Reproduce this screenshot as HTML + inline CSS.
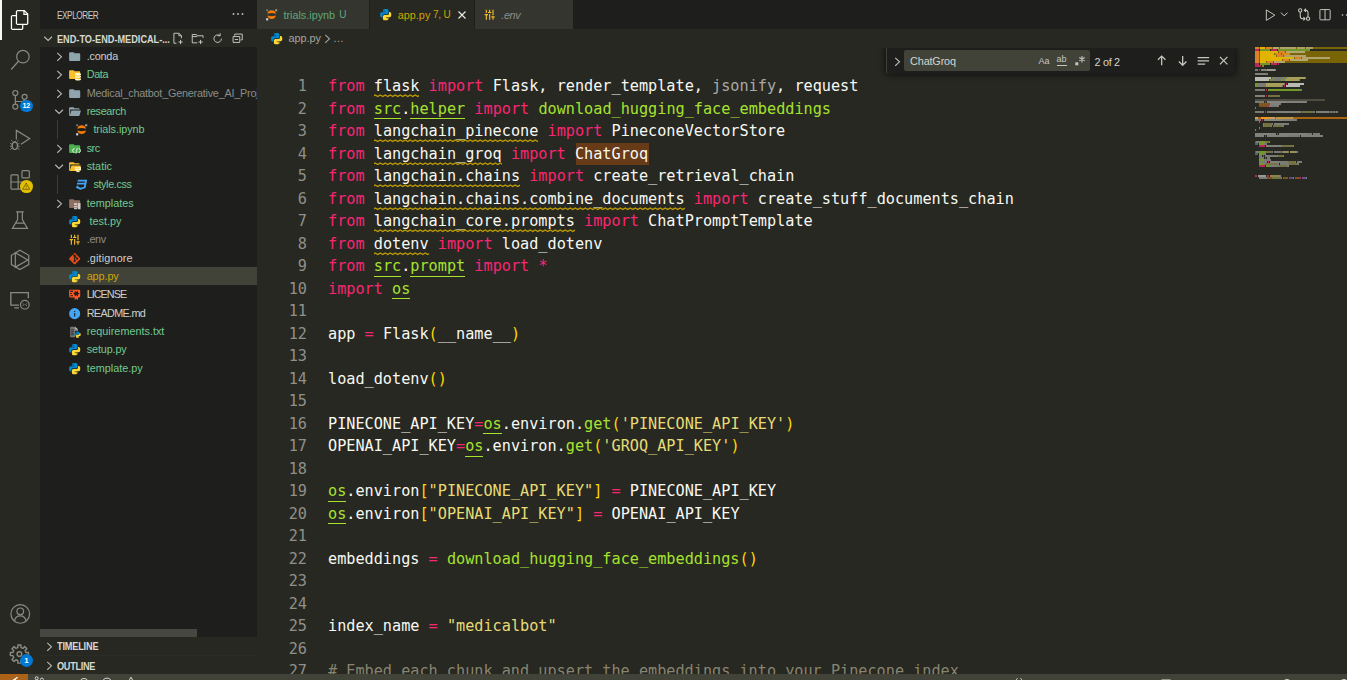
<!DOCTYPE html>
<html lang="en">
<head>
<meta charset="utf-8">
<title>app.py - End-to-end-Medical-Chatbot - Visual Studio Code</title>
<style>
*{box-sizing:border-box;margin:0;padding:0}
html,body{width:1347px;height:680px;overflow:hidden;background:#272822}
body{position:relative;font-family:"Liberation Sans",sans-serif;font-size:10.83px;color:#ccc}
/* activity bar */
#act{position:absolute;left:0;top:0;width:40px;height:674px;background:#272822;overflow:hidden}
#act .ind{position:absolute;left:0;top:0;width:1.500px;height:40px;background:#f8f8f2}
#act>svg{position:absolute;left:10px;width:20px;height:20px;fill:none;stroke:#8a8a80;stroke-width:1.450;overflow:visible}
.badge{position:absolute;border-radius:50%;background:#0078d4;color:#fff;font-weight:700;text-align:center}
.badge svg{position:absolute;fill:none}
/* sidebar */
#side{position:absolute;left:40px;top:0;width:217px;height:674px;background:#1e1f1c;overflow:hidden}
#side .title{position:absolute;left:17px;top:9.850px;font-size:10px;line-height:11px;color:#ccccc7;letter-spacing:-.550px;white-space:nowrap;transform:scaleX(.826);transform-origin:0 0}
#side .sec{position:absolute;left:0;top:29px;width:217px;height:18.200px;background:#272822}
#side .sec b{position:absolute;left:17px;top:4.800px;font-size:10px;line-height:11px;color:#d8d8d2;font-weight:700;white-space:nowrap;transform:scaleX(.917);transform-origin:0 0}
.row{position:absolute;left:0;width:217px;height:18.330px;line-height:18.100px;white-space:nowrap;color:#cfcfc9}
.row span{position:absolute;top:0}
.row.g span{color:#73c991}
.row.dim span{color:#8c8c86}
.row.sel{background:#414339}
.row.sel span{color:#cca700}
.tw{position:absolute;top:2.800px;width:13.330px;height:13.330px;color:#bdbdb8}
.ic{position:absolute;top:2.900px;width:13.330px;height:13.330px}
.guide{position:absolute;left:17px;width:1px;height:18.330px;background:#3b3c37}
.pane{position:absolute;left:0;width:217px;height:18.500px;background:#272822}
.pane b{position:absolute;left:17px;top:4.300px;font-size:10px;line-height:11px;color:#d8d8d2;font-weight:700;transform:scaleX(.917);transform-origin:0 0}
/* editor */
#tabs{position:absolute;left:257px;top:0;width:1090px;height:29.170px;background:#1e1f1c;overflow:hidden}
.tab{position:absolute;top:0;height:29.170px;background:#34352f;line-height:30.500px;white-space:nowrap;border-right:1px solid #1e1f1c}
.tab.act{background:#272822}
.tab span{position:absolute;top:0}
.ea{position:absolute;width:13.330px;height:13.330px;fill:none;stroke:#d0d0ca;stroke-width:1.100}
#crumbs{position:absolute;left:257px;top:29.170px;width:1090px;height:18.330px;line-height:18.500px;background:#272822;color:#a6a6a0;white-space:nowrap}
#crumbs span{position:absolute;top:0}
/* code */
#code{position:absolute;left:257px;top:75px;width:998px;height:599px;overflow:hidden;font-family:"DejaVu Sans Mono","Liberation Mono",monospace;font-size:15.200px;color:#f8f8f2}
.ln{position:absolute;left:0;width:998px;height:22.500px;line-height:22.500px;white-space:pre}
.ln i{position:absolute;left:0;width:50px;text-align:right;color:#90908a;font-style:normal}
.ln code{position:absolute;left:71px;font-family:inherit;font-size:inherit}
.k{color:#f92672}.f{color:#a6e22e}.s{color:#e6db74}.c{color:#88846f}.p{color:#f8f8f2}.y{color:#ffd700}.d{color:#a9a9a3}
.sq{position:relative}
.sq svg{position:absolute;left:0;top:calc(100% - .600px);width:100%;height:4px;overflow:hidden}
.ul{border-bottom:1px solid #a6e22e;padding-bottom:.600px}
.fmb{position:absolute;top:0;height:22.500px;background:#673a18}
/* find widget */
#findc{position:absolute;left:870px;top:47.500px;width:390px;height:45px;overflow:hidden}
#find{position:absolute;left:16px;top:-.500px;width:349px;height:27.300px;border-radius:0 0 3px 3px;background:#1e1f1c;box-shadow:0 0 6px 1px rgba(0,0,0,.600);border-left:1px solid #3e3f39;color:#d4d4ce;white-space:nowrap}
#find .inp{position:absolute;left:17px;top:3.300px;width:186px;height:21px;background:#414339;line-height:21px;border-radius:2px}
#find span{position:absolute;top:0}
#find .opt{font-size:9px;color:#c5c5c0}
#find .cnt{top:4.700px;line-height:20.800px;letter-spacing:-.3px}
.fb{position:absolute;top:7px;width:13.330px;height:13.330px;fill:none;stroke:#c4c4be;stroke-width:1.550}
#mm{position:absolute;left:1255px;top:47px}
#status{position:absolute;left:0;top:673.500px;width:1347px;height:7px;background:#414339;overflow:hidden}
#status .rem{position:absolute;left:0;top:0;width:28px;height:7px;background:#ac6218}
#status svg{position:absolute;top:1px;width:12px;height:12px;fill:none;stroke:#e8e8e2;stroke-width:1.200}
</style>
</head>
<body>
<svg width="0" height="0" style="position:absolute">
<defs>
<pattern id="wz" width="5" height="4" patternUnits="userSpaceOnUse"><path d="M-1.25 2.55 L1.25 0.95 L3.75 2.55 L6.25 0.95" fill="none" stroke="#c4a000" stroke-width="1.15" stroke-linejoin="round"/></pattern>
<symbol id="i-folder" viewBox="0 0 24 24"><path fill="#90a4ae" d="M10 4H4c-1.11 0-2 .89-2 2v12a2 2 0 0 0 2 2h16a2 2 0 0 0 2-2V8c0-1.11-.9-2-2-2h-8l-2-2z"/></symbol>
<symbol id="i-folder-open" viewBox="0 0 24 24"><path fill="#90a4ae" d="M19 20H4a2 2 0 0 1-2-2V6c0-1.11.89-2 2-2h6l2 2h7a2 2 0 0 1 2 2H4v10l2.14-8h17.07l-2.28 8.5c-.23.87-1.01 1.5-1.93 1.5z"/></symbol>
<symbol id="i-folder-data" viewBox="0 0 24 24"><path fill="#fbc02d" d="M10 4H4c-1.11 0-2 .89-2 2v12a2 2 0 0 0 2 2h16a2 2 0 0 0 2-2V8c0-1.11-.9-2-2-2h-8l-2-2z"/><g fill="#fff9c4"><ellipse cx="18" cy="11.5" rx="5.5" ry="2.3"/><path d="M12.5 13.2c0 1.3 2.5 2.3 5.5 2.300s5.500-1 5.500-2.300v2.600c0 1.300-2.500 2.300-5.500 2.300s-5.500-1-5.500-2.300z"/><path d="M12.500 17.500c0 1.300 2.500 2.300 5.500 2.300s5.500-1 5.500-2.300v2.600c0 1.300-2.500 2.300-5.500 2.300s-5.500-1-5.500-2.300z"/></g></symbol>
<symbol id="i-folder-src" viewBox="0 0 24 24"><path fill="#4caf50" d="M10 4H4c-1.11 0-2 .89-2 2v12a2 2 0 0 0 2 2h16a2 2 0 0 0 2-2V8c0-1.11-.9-2-2-2h-8l-2-2z"/><path fill="none" stroke="#c8e6c9" stroke-width="1.900" d="M11.700 11.200 7.700 15.500l4 4.300M19.300 11.200l4 4.300-4 4.300M16.900 10.500l-2.800 10.500"/></symbol>
<symbol id="i-folder-static" viewBox="0 0 24 24"><path fill="#fbc02d" d="M19 20H4a2 2 0 0 1-2-2V6c0-1.11.89-2 2-2h6l2 2h7a2 2 0 0 1 2 2H4v10l2.140-8h17.070l-2.280 8.500c-.23.870-1.010 1.500-1.930 1.500z"/><g fill="#fff9c4"><rect x="12.500" y="12.500" width="11" height="6.500" rx="1"/><rect x="15" y="20" width="6" height="1.800"/></g><path fill="#fbc02d" d="M14 14h8v1.300h-8z"/></symbol>
<symbol id="i-folder-tpl" viewBox="0 0 24 24"><path fill="#8d6e63" d="M10 4H4c-1.110 0-2 .89-2 2v12a2 2 0 0 0 2 2h16a2 2 0 0 0 2-2V8c0-1.110-.9-2-2-2h-8l-2-2z"/><g fill="#d7ccc8"><rect x="11" y="11" width="5" height="3.500"/><rect x="17.500" y="11" width="5" height="11"/><rect x="11" y="16" width="5" height="2.500"/><rect x="11" y="19.500" width="5" height="2.500"/></g></symbol>
<symbol id="i-py" viewBox="0 0 24 24"><path fill="#0288d1" d="M9.860 2A2.860 2.860 0 0 0 7 4.860v1.680h4.290c.39 0 .71.570.71.960H4.860A2.860 2.860 0 0 0 2 10.360v3.781a2.860 2.860 0 0 0 2.860 2.860h1.180v-2.680a2.850 2.850 0 0 1 2.850-2.860h5.250c1.580 0 2.860-1.271 2.860-2.851V4.860A2.860 2.860 0 0 0 14.140 2zm-.72 1.610c.4 0 .72.120.72.710s-.32.891-.72.891c-.39 0-.71-.3-.71-.89s.32-.711.710-.711"/><path fill="#fdd835" d="M17.959 7v2.680a2.850 2.850 0 0 1-2.850 2.859H9.860A2.850 2.850 0 0 0 7 15.389v3.750a2.860 2.860 0 0 0 2.860 2.860h4.280A2.860 2.860 0 0 0 17 19.140v-1.680h-4.291c-.39 0-.709-.57-.709-.96h7.140A2.860 2.860 0 0 0 22 13.640V9.860A2.860 2.860 0 0 0 19.140 7zm-3.099 11.789c.39 0 .71.3.71.890a.71.710 0 0 1-.71.710c-.4 0-.72-.12-.72-.71s.32-.89.720-.890"/></symbol>
<symbol id="i-jup" viewBox="0 0 24 24"><path fill="#f57c00" d="M4.200 10.300A8 8 0 0 1 19.800 10.300Q12 7.900 4.200 10.300zM4.200 13.700A8 8 0 0 0 19.800 13.700Q12 16.100 4.200 13.700z"/><rect x="2.100" y="2.300" width="3.600" height="3.600" fill="#757575"/><rect x="18.200" y="2.300" width="3.800" height="3.600" fill="#9e9e9e"/><rect x="2.100" y="18.400" width="3.700" height="3.900" fill="#e0e0e0"/></symbol>
<symbol id="i-css" viewBox="0 0 24 24"><path fill="#42a5f5" d="M5 3l-.65 3.340h13.590L17.500 8.500H3.920l-.66 3.330h13.590l-.760 3.810-5.480 1.810-4.750-1.810.33-1.640H2.850l-.79 4 7.850 3 9.050-3 1.200-6.030.24-1.210L21.940 3z"/></symbol>
<symbol id="i-env" viewBox="0 0 24 24"><g fill="#fbc02d"><path d="M3 17v2h6v-2zM3 5v2h10V5zm10 16v-2h8v-2h-8v-2h-2v6zM7 9v2H3v2h4v2h2V9zm14 4v-2H11v2zm-6-4h2V7h4V5h-4V3h-2z" transform="rotate(90 12 12)"/></g></symbol>
<symbol id="i-git" viewBox="0 0 24 24"><path fill="#e64a19" d="M2.600 10.590 8.380 4.800l1.690 1.700c-.24.850.150 1.780.930 2.230v5.540c-.6.340-1 .990-1 1.730a2 2 0 0 0 2 2 2 2 0 0 0 2-2c0-.740-.4-1.390-1-1.730V9.410l2.070 2.090c-.07.150-.07.320-.7.500a2 2 0 0 0 2 2 2 2 0 0 0 2-2 2 2 0 0 0-2-2c-.18 0-.35 0-.5.070L13.930 7.500a1.980 1.980 0 0 0-1.150-2.340c-.43-.160-.88-.2-1.280-.09L9.800 3.380l.79-.78c.78-.79 2.040-.79 2.820 0l7.990 7.990c.79.780.79 2.040 0 2.820l-7.990 7.990c-.78.790-2.040.79-2.820 0L2.600 13.410c-.79-.78-.79-2.040 0-2.820z"/></symbol>
<symbol id="i-lic" viewBox="0 0 24 24"><path fill="#ff5722" d="M4 3c-1.110 0-2 .89-2 2v10a2 2 0 0 0 2 2h8v5l3-3 3 3v-5h2a2 2 0 0 0 2-2V5a2 2 0 0 0-2-2H4m8 2 3 2 3-2v3.500l3 1.500-3 1.500V15l-3-2-3 2v-3.500L9 10l3-1.500V5M4 5h5v2H4V5m0 4h3v2H4V9m0 4h5v2H4v-2z"/></symbol>
<symbol id="i-readme" viewBox="0 0 24 24"><path fill="#42a5f5" d="M13 9h-2V7h2m0 10h-2v-6h2m-1-9A10 10 0 0 0 2 12a10 10 0 0 0 10 10 10 10 0 0 0 10-10A10 10 0 0 0 12 2z"/></symbol>
<symbol id="i-req" viewBox="0 0 24 24"><path fill="#757575" d="M4 3h9l5 5v3h-5v11H4z"/><path fill="#bdbdbd" d="M13 3l5 5h-5z"/><g fill="#1e1f1c"><rect x="5.500" y="8" width="5" height="1.300"/><rect x="5.500" y="11" width="5" height="1.300"/><rect x="5.500" y="14" width="5" height="1.300"/><rect x="5.500" y="17" width="5" height="1.300"/></g><g transform="translate(10.500 10.500) scale(.56)"><path fill="#0288d1" d="M9.860 2A2.860 2.860 0 0 0 7 4.860v1.680h4.290c.39 0 .71.570.71.960H4.860A2.860 2.860 0 0 0 2 10.360v3.781a2.860 2.860 0 0 0 2.860 2.860h1.180v-2.680a2.850 2.850 0 0 1 2.850-2.860h5.250c1.580 0 2.860-1.271 2.860-2.851V4.860A2.860 2.860 0 0 0 14.140 2z"/><path fill="#fdd835" d="M17.959 7v2.680a2.850 2.850 0 0 1-2.850 2.859H9.860A2.850 2.850 0 0 0 7 15.389v3.750a2.860 2.860 0 0 0 2.860 2.860h4.280A2.860 2.860 0 0 0 17 19.140v-1.680h-4.291c-.39 0-.709-.57-.709-.96h7.140A2.860 2.860 0 0 0 22 13.640V9.860A2.860 2.860 0 0 0 19.140 7z"/></g></symbol>
<symbol id="c-right" viewBox="0 0 16 16"><path fill="none" stroke="currentColor" stroke-width="1.250" d="M6.300 3.500 11.400 8.200 6.300 12.900"/></symbol>
<symbol id="c-down" viewBox="0 0 16 16"><path fill="none" stroke="currentColor" stroke-width="1.250" d="M3.900 5.700 8.550 10.100 13.200 5.700"/></symbol>
</defs>
</svg>
<div id="act"><div class="ind"></div>
<!-- explorer (files) -->
<svg style="top:10px" viewBox="0 0 24 24"><path d="M17.500 0h-9L7 1.500V6H2.500L1 7.500v15.070L2.500 24h12.070L16 22.570V18h4.700l1.300-1.430V4.500L17.500 0zm0 2.120 2.380 2.380H17.500V2.120zm-3 20.380h-12v-15H7v9.070L8.500 18h6v4.500zm6-6h-12v-15H16V6h4.500v10.500z" fill="#fff" stroke="none"/></svg>
<!-- search -->
<svg style="top:50px" viewBox="0 0 24 24"><circle cx="15.500" cy="8" r="7.500"/><path d="M10.200 13.500 1.400 23.400"/></svg>
<!-- source control -->
<svg style="top:90px" viewBox="0 0 24 24"><circle cx="6.400" cy="3.600" r="3"/><circle cx="6.400" cy="19.900" r="3"/><circle cx="17.500" cy="8.200" r="3"/><path d="M6.400 6.600v10.300M17.500 11.200c0 2.600-1.500 2.600-4 2.600H6.400"/></svg>
<div class="badge" style="left:20px;top:99.700px;width:12.800px;height:12.800px;line-height:12.800px;font-size:7.200px;letter-spacing:-.4px;text-indent:-.4px">12</div>
<!-- run and debug -->
<svg style="top:130px" viewBox="0 0 24 24"><path d="M7.600 11.500V.500L23.600 10.300 13.200 17"/><ellipse cx="5.800" cy="19" rx="3.100" ry="4.400"/><path d="M3.400 15.500 5 14h1.600l1.600 1.500M2.700 17.500.300 16M2.700 19.500H0M2.700 21.500.300 23.500M8.900 17.500l2.400-1.500M8.900 19.500h2.700M8.900 21.500l2.400 2M3 13.500 1.500 12.300M8.600 13.500l1.500-1.200" stroke-width="1.200"/></svg>
<!-- extensions -->
<svg style="top:170px" viewBox="0 0 24 24"><path d="M2.200 5.800h6.600a1 1 0 0 1 1 1v7.600H1.200V6.800a1 1 0 0 1 1-1zM1.200 14.400h8.600V23H2.200a1 1 0 0 1-1-1zM9.800 14.400h7.600a1 1 0 0 1 1 1V22a1 1 0 0 1-1 1H9.800z"/><rect x="14.400" y=".7" width="8.800" height="8.800" rx="1.200"/></svg>
<div class="badge" style="left:20.200px;top:180px;width:12.800px;height:12.800px;background:#e3bf00"><svg viewBox="0 0 12 12" style="left:2.200px;top:1.700px;width:8.400px;height:8.400px;stroke:#5c4a00;stroke-width:1"><path d="M6 1.300 11 10.500H1zM6 4.800v3.200M6 8.800v.8"/></svg></div>
<!-- testing (beaker) -->
<svg style="top:210px" viewBox="0 0 24 24"><path d="M7.300 2.300h9.100M9.100 2.300v9.200L2.900 22h18L14.800 11.500V2.300M6.500 15.800h11"/></svg>
<!-- play hexagon -->
<svg style="top:250px" viewBox="0 0 24 24"><path d="M11.900 .300 22.500 6.300v11.200l-10.600 6L1.700 17.500V6.300z"/><path d="M6.400 3.200 21.400 11.900 6.400 20.500z"/></svg>
<!-- remote explorer -->
<svg style="top:290px" viewBox="0 0 24 24"><path d="M10.700 18.200H1v-15h21v6.600M5.200 21.500h5.500" stroke-width="1.600"/><circle cx="17.800" cy="17.600" r="5.200"/><path d="M15.300 16l1.500 1.600-1.500 1.600M20.300 16l-1.500 1.600 1.500 1.600" stroke-width="1"/></svg>
<!-- account -->
<svg style="top:604px" viewBox="0 0 24 24"><circle cx="12.300" cy="11.900" r="11.200"/><circle cx="12.300" cy="8.800" r="4"/><path d="M5.300 20.500c.8-4.300 3.500-6.200 7-6.200s6.200 1.900 7 6.200"/></svg>
<!-- settings gear -->
<svg style="top:644px" viewBox="0 0 24 24"><circle cx="11.3" cy="12.1" r="2.800" stroke-width="1.700"/><path stroke-width="1.700" d="M9.43 4.32 L9.48 1.25 L13.12 1.25 L13.17 4.32 L15.48 5.28 L17.69 3.14 L20.26 5.71 L18.12 7.92 L19.08 10.23 L22.15 10.28 L22.15 13.92 L19.08 13.97 L18.12 16.28 L20.26 18.49 L17.69 21.06 L15.48 18.92 L13.17 19.88 L13.12 22.95 L9.48 22.95 L9.43 19.88 L7.12 18.92 L4.91 21.06 L2.34 18.49 L4.48 16.28 L3.52 13.97 L0.45 13.92 L0.45 10.28 L3.52 10.23 L4.48 7.92 L2.34 5.71 L4.91 3.14 L7.12 5.28z" stroke-linejoin="round"/></svg>
<div class="badge" style="left:20px;top:653.700px;width:13px;height:13px;line-height:13px;font-size:8px">1</div>
</div>
<div id="side">
<div class="title">EXPLORER</div>
<svg style="position:absolute;left:192px;top:11px;width:12px;height:6px" viewBox="0 0 12 6"><circle cx="1.500" cy="3" r=".9" fill="#c5c5c0"/><circle cx="6" cy="3" r=".9" fill="#c5c5c0"/><circle cx="10.500" cy="3" r=".9" fill="#c5c5c0"/></svg>
<div class="sec"><svg class="tw" style="left:.800px;top:3.200px"><use href="#c-down"/></svg><b>END-TO-END-MEDICAL-...</b>
<svg class="ea" style="left:131px;top:2.600px" viewBox="0 0 16 16"><path d="M9.500 1.500h-6v12h3M9.500 1.500l3 3v3M9.500 1.500v3h3M11.500 9.500v5M9 12h5"/></svg>
<svg class="ea" style="left:151px;top:2.600px" viewBox="0 0 16 16"><path d="M14.500 7V4.500h-7l-1-1.500h-5v10h6M11.500 9.500v5M9 12h5M1.500 5.500h6"/></svg>
<svg class="ea" style="left:171px;top:2.600px" viewBox="0 0 16 16"><path d="M12.500 8a4.500 4.500 0 1 1-1.800-3.600M11 1.500v3h-3"/></svg>
<svg class="ea" style="left:191px;top:2.600px" viewBox="0 0 16 16"><path d="M4.500 4.500v-2h9v7h-2M2.500 5.500h8v7h-8zM4.500 9h4"/></svg>
</div>
<div class="row " style="top:47.10px"><svg class="tw" style="left:12px"><use href="#c-right"/></svg><svg class="ic" style="left:27.8px"><use href="#i-folder"/></svg><span style="left:46.7px;letter-spacing:-0.2px">.conda</span></div>
<div class="row g" style="top:65.43px"><svg class="tw" style="left:12px"><use href="#c-right"/></svg><svg class="ic" style="left:27.8px"><use href="#i-folder-data"/></svg><span style="left:46.7px;letter-spacing:-0.37px">Data</span></div>
<div class="row dim" style="top:83.77px"><svg class="tw" style="left:12px"><use href="#c-right"/></svg><svg class="ic" style="left:27.8px"><use href="#i-folder"/></svg><span style="left:46.7px;letter-spacing:-0.226px">Medical_chatbot_Generative_AI_Project</span></div>
<div class="row g" style="top:102.10px"><svg class="tw" style="left:12px"><use href="#c-down"/></svg><svg class="ic" style="left:27.8px"><use href="#i-folder-open"/></svg><span style="left:46.7px;letter-spacing:-0.367px">research</span></div>
<div class="row g" style="top:120.43px"><svg class="ic" style="left:34.5px"><use href="#i-jup"/></svg><span style="left:53.4px;letter-spacing:-0.05px">trials.ipynb</span></div>
<div class="row g" style="top:138.77px"><svg class="tw" style="left:12px"><use href="#c-right"/></svg><svg class="ic" style="left:27.8px"><use href="#i-folder-src"/></svg><span style="left:46.7px;letter-spacing:-0.48px">src</span></div>
<div class="row g" style="top:157.10px"><svg class="tw" style="left:12px"><use href="#c-down"/></svg><svg class="ic" style="left:27.8px"><use href="#i-folder-static"/></svg><span style="left:46.7px">static</span></div>
<div class="row g" style="top:175.43px"><svg class="ic" style="left:34.5px"><use href="#i-css"/></svg><span style="left:53.4px;letter-spacing:-0.37px">style.css</span></div>
<div class="row g" style="top:193.77px"><svg class="tw" style="left:12px"><use href="#c-right"/></svg><svg class="ic" style="left:27.8px"><use href="#i-folder-tpl"/></svg><span style="left:46.7px">templates</span></div>
<div class="row g" style="top:212.10px"><svg class="ic" style="left:27.8px"><use href="#i-py"/></svg><span style="left:49.5px">test.py</span></div>
<div class="row dim" style="top:230.43px"><svg class="ic" style="left:27.8px"><use href="#i-env"/></svg><span style="left:46.7px;letter-spacing:-0.32px">.env</span></div>
<div class="row " style="top:248.77px"><svg class="ic" style="left:27.8px"><use href="#i-git"/></svg><span style="left:46.7px;letter-spacing:0.155px">.gitignore</span></div>
<div class="row sel" style="top:267.10px"><svg class="ic" style="left:27.8px"><use href="#i-py"/></svg><span style="left:46.7px;letter-spacing:-0.09px">app.py</span></div>
<div class="row " style="top:285.43px"><svg class="ic" style="left:27.8px"><use href="#i-lic"/></svg><span style="left:46.7px;letter-spacing:-0.98px">LICENSE</span></div>
<div class="row " style="top:303.77px"><svg class="ic" style="left:27.8px"><use href="#i-readme"/></svg><span style="left:46.7px;letter-spacing:-0.65px">README.md</span></div>
<div class="row g" style="top:322.10px"><svg class="ic" style="left:27.8px"><use href="#i-req"/></svg><span style="left:46.7px">requirements.txt</span></div>
<div class="row g" style="top:340.43px"><svg class="ic" style="left:27.8px"><use href="#i-py"/></svg><span style="left:46.7px;letter-spacing:-0.12px">setup.py</span></div>
<div class="row g" style="top:358.77px"><svg class="ic" style="left:27.8px"><use href="#i-py"/></svg><span style="left:46.7px">template.py</span></div>
<div class="guide" style="top:120.43px"></div>
<div class="guide" style="top:175.43px"></div>

<div style="position:absolute;left:0;top:629px;width:157px;height:8.300px;background:#464741"></div>
<div class="pane" style="top:637.200px"><svg class="tw" style="left:1.500px;top:2.500px"><use href="#c-right"/></svg><b style="letter-spacing:-.2px">TIMELINE</b></div>
<div class="pane" style="top:655.400px;border-top:1px solid #2b2c26"><svg class="tw" style="left:1.500px;top:2.500px"><use href="#c-right"/></svg><b style="letter-spacing:-.33px">OUTLINE</b></div>
</div>
<div id="tabs">
<div class="tab" style="left:0;width:113.200px"><svg class="ic" style="left:7.700px;top:7.800px"><use href="#i-jup"/></svg><span style="left:26.400px;color:#5fa87a">trials.ipynb</span><span style="left:82.300px;top:.400px;color:#5fa87a;font-size:10px">U</span></div>
<div class="tab act" style="left:113.200px;width:105px"><svg class="ic" style="left:8.600px;top:7.800px"><use href="#i-py"/></svg><span style="left:27.600px;color:#cca700">app.py</span><span style="left:62.800px;top:.400px;color:#cca700;font-size:10px;letter-spacing:-.2px">7, U</span><svg style="position:absolute;left:87.300px;top:9.500px;width:10px;height:10px" viewBox="0 0 10 10"><path d="M1.500 1.500l7 7M8.500 1.500l-7 7" stroke="#f0f0ea" stroke-width="1.100" fill="none"/></svg></div>
<div class="tab" style="left:218.200px;width:98.500px"><svg class="ic" style="left:7.500px;top:7.800px"><use href="#i-env"/></svg><span style="left:26px;color:#8c8c86;font-style:italic;letter-spacing:-.3px">.env</span></div>
<!-- editor actions -->
<svg class="ea" style="left:1006px;top:7.500px" viewBox="0 0 16 16"><path d="M4 2.300v12.600l10.200-6.300z"/></svg>
<svg class="ea" style="left:1022.300px;top:8.800px;width:10.500px;height:10.500px" viewBox="0 0 16 16"><path d="M3 5.500l5 5 5-5" stroke-width="1.500"/></svg>
<svg class="ea" style="left:1039.500px;top:7px;width:14.700px;height:14.700px" viewBox="0 0 16 16"><circle cx="3.500" cy="3.800" r="1.800"/><circle cx="12" cy="12.700" r="1.800"/><path d="M3.500 5.600V10c0 2 1 2.700 2.500 2.700h2.200M7 10.900l1.700 1.800L7 14.500M12 10.900V6.300c0-2-1-2.700-2.500-2.700H8.300M9.700 1.800 8 3.600l1.700 1.800"/></svg>
<svg class="ea" style="left:1061px;top:7.500px" viewBox="0 0 16 16"><rect x="2.300" y="1.900" width="12.300" height="12.300" rx="1"/><path d="M8.450 1.900v12.300"/></svg>
<svg class="ea" style="left:1083px;top:7.500px" viewBox="0 0 16 16"><circle cx="3" cy="8.400" r="1" fill="#d0d0ca" stroke="none"/><circle cx="8" cy="8.400" r="1" fill="#d0d0ca" stroke="none"/></svg>
</div>
<div id="crumbs"><svg class="ic" style="left:13.300px;top:2.600px"><use href="#i-py"/></svg><span style="left:31.500px">app.py</span><svg class="tw" style="left:62.500px;top:2.800px;color:#a6a6a0"><use href="#c-right"/></svg><span style="left:76px;letter-spacing:-.3px">…</span></div>
<div id="code">
<div class="ln" style="top:0.0px"><i>1</i><code><span class="k">from</span> <span class="sq">flask<svg><rect width="100%" height="4" fill="url(#wz)"/></svg></span> <span class="k">import</span> Flask, render_template, <span class="d">jsonify</span>, request</code></div>
<div class="ln" style="top:22.5px"><i>2</i><code><span class="k">from</span> <span class="f ul">src</span>.<span class="f ul">helper</span> <span class="k">import</span> <span class="f">download_hugging_face_embeddings</span></code></div>
<div class="ln" style="top:45.0px"><i>3</i><code><span class="k">from</span> <span class="sq">langchain_pinecone<svg><rect width="100%" height="4" fill="url(#wz)"/></svg></span> <span class="k">import</span> PineconeVectorStore</code></div>
<div class="ln" style="top:67.5px"><div class="fmb" style="left:318.500px;width:73.200px"></div><i>4</i><code><span class="k">from</span> <span class="sq">langchain_groq<svg><rect width="100%" height="4" fill="url(#wz)"/></svg></span> <span class="k">import</span> ChatGroq</code></div>
<div class="ln" style="top:90.0px"><i>5</i><code><span class="k">from</span> <span class="sq">langchain.chains<svg><rect width="100%" height="4" fill="url(#wz)"/></svg></span> <span class="k">import</span> create_retrieval_chain</code></div>
<div class="ln" style="top:112.5px"><i>6</i><code><span class="k">from</span> <span class="sq">langchain.chains.combine_documents<svg><rect width="100%" height="4" fill="url(#wz)"/></svg></span> <span class="k">import</span> create_stuff_documents_chain</code></div>
<div class="ln" style="top:135.0px"><i>7</i><code><span class="k">from</span> <span class="sq">langchain_core.prompts<svg><rect width="100%" height="4" fill="url(#wz)"/></svg></span> <span class="k">import</span> ChatPromptTemplate</code></div>
<div class="ln" style="top:157.5px"><i>8</i><code><span class="k">from</span> <span class="sq">dotenv<svg><rect width="100%" height="4" fill="url(#wz)"/></svg></span> <span class="k">import</span> load_dotenv</code></div>
<div class="ln" style="top:180.0px"><i>9</i><code><span class="k">from</span> <span class="f ul">src</span>.<span class="f ul">prompt</span> <span class="k">import</span> <span class="k">*</span></code></div>
<div class="ln" style="top:202.5px"><i>10</i><code><span class="k">import</span> <span class="f ul">os</span></code></div>
<div class="ln" style="top:225.0px"><i>11</i><code></code></div>
<div class="ln" style="top:247.5px"><i>12</i><code>app <span class="k">=</span> Flask<span class="y">(</span>__name__<span class="y">)</span></code></div>
<div class="ln" style="top:270.0px"><i>13</i><code></code></div>
<div class="ln" style="top:292.5px"><i>14</i><code>load_dotenv<span class="y">()</span></code></div>
<div class="ln" style="top:315.0px"><i>15</i><code></code></div>
<div class="ln" style="top:337.5px"><i>16</i><code>PINECONE_API_KEY<span class="k">=</span><span class="f ul">os</span>.environ.<span class="f">get</span><span class="y">(</span><span class="s">'PINECONE_API_KEY'</span><span class="y">)</span></code></div>
<div class="ln" style="top:360.0px"><i>17</i><code>OPENAI_API_KEY<span class="k">=</span><span class="f ul">os</span>.environ.<span class="f">get</span><span class="y">(</span><span class="s">'GROQ_API_KEY'</span><span class="y">)</span></code></div>
<div class="ln" style="top:382.5px"><i>18</i><code></code></div>
<div class="ln" style="top:405.0px"><i>19</i><code><span class="f ul">os</span>.environ<span class="y">[</span><span class="s">"PINECONE_API_KEY"</span><span class="y">]</span> <span class="k">=</span> PINECONE_API_KEY</code></div>
<div class="ln" style="top:427.5px"><i>20</i><code><span class="f ul">os</span>.environ<span class="y">[</span><span class="s">"OPENAI_API_KEY"</span><span class="y">]</span> <span class="k">=</span> OPENAI_API_KEY</code></div>
<div class="ln" style="top:450.0px"><i>21</i><code></code></div>
<div class="ln" style="top:472.5px"><i>22</i><code>embeddings <span class="k">=</span> <span class="f">download_hugging_face_embeddings</span><span class="y">()</span></code></div>
<div class="ln" style="top:495.0px"><i>23</i><code></code></div>
<div class="ln" style="top:517.5px"><i>24</i><code></code></div>
<div class="ln" style="top:540.0px"><i>25</i><code>index_name <span class="k">=</span> <span class="s">"medicalbot"</span></code></div>
<div class="ln" style="top:562.5px"><i>26</i><code></code></div>
<div class="ln" style="top:585.0px"><i>27</i><code><span class="c"># Embed each chunk and upsert the embeddings into your Pinecone index</span></code></div>
</div>
<div id="findc"><div id="find">
<svg class="tw" style="left:3px;top:7.500px;color:#c5c5c0"><use href="#c-right"/></svg>
<div class="inp"><span style="left:6.100px;top:.800px;letter-spacing:-.15px">ChatGroq</span>
<span class="opt" style="left:134.400px;top:.400px">Aa</span>
<span class="opt" style="left:152.500px;border-bottom:1px solid #c5c5c0;line-height:11px;top:4px">ab</span>
<svg style="position:absolute;left:169.500px;top:4.500px;width:12px;height:12px" viewBox="0 0 12 12"><rect x="1.300" y="7.300" width="3" height="3" fill="#c5c5c0"/><path d="M8 1v6.400M5.300 2.500l5.400 3.400M10.700 2.500 5.300 5.900" stroke="#c5c5c0" stroke-width="1.100" fill="none"/></svg>
</div>
<span class="cnt" style="left:207.500px">2 of 2</span>
<svg class="fb" style="left:268px" viewBox="0 0 16 16"><path d="M8 13.500v-11M3.500 7 8 2.500 12.500 7"/></svg>
<svg class="fb" style="left:288.500px" viewBox="0 0 16 16"><path d="M8 2.500v11M3.500 9 8 13.500 12.500 9"/></svg>
<svg class="fb" style="left:309.500px" viewBox="0 0 16 16"><path d="M.800 4.300h13.700M.800 8.200h13.700M.800 12.100h9"/></svg>
<svg class="fb" style="left:330px" viewBox="0 0 16 16"><path d="M3.500 3.500l9 9M12.500 3.500l-9 9"/></svg>
</div></div>
<svg id="mm" width="92" height="132" viewBox="0 0 92 132" shape-rendering="crispEdges"><rect x="0" y="0" width="92" height="2" fill="#7a6408"/><rect x="0" y="4" width="92" height="2" fill="#7a6408"/><rect x="0" y="6" width="92" height="2" fill="#7a6408"/><rect x="0" y="8" width="92" height="2" fill="#7a6408"/><rect x="0" y="10" width="92" height="2" fill="#7a6408"/><rect x="0" y="12" width="92" height="2" fill="#7a6408"/><rect x="0" y="14" width="92" height="2" fill="#7a6408"/><rect x="0" y="70" width="92" height="2" fill="#a8650f"/><rect x="0" y="0" width="4" height="2" fill="#e8862a" opacity="0.9"/><rect x="5" y="0" width="5" height="2" fill="#f8f8f2" opacity="0.4"/><rect x="11" y="0" width="6" height="2" fill="#e8862a" opacity="0.9"/><rect x="18" y="0" width="5" height="2" fill="#f8f8f2" opacity="0.46"/><rect x="23" y="0" width="1" height="2" fill="#f8f8f2" opacity="0.4"/><rect x="25" y="0" width="15" height="2" fill="#f8f8f2" opacity="0.42"/><rect x="40" y="0" width="1" height="2" fill="#f8f8f2" opacity="0.4"/><rect x="42" y="0" width="7" height="2" fill="#f8f8f2" opacity="0.4"/><rect x="49" y="0" width="1" height="2" fill="#f8f8f2" opacity="0.4"/><rect x="51" y="0" width="7" height="2" fill="#f8f8f2" opacity="0.4"/><rect x="0" y="2" width="4" height="2" fill="#f92672" opacity="0.7"/><rect x="5" y="2" width="3" height="2" fill="#a6e22e" opacity="0.6"/><rect x="8" y="2" width="1" height="2" fill="#f8f8f2" opacity="0.4"/><rect x="9" y="2" width="6" height="2" fill="#a6e22e" opacity="0.6"/><rect x="16" y="2" width="6" height="2" fill="#f92672" opacity="0.7"/><rect x="23" y="2" width="32" height="2" fill="#a6e22e" opacity="0.6"/><rect x="0" y="4" width="4" height="2" fill="#e8862a" opacity="0.9"/><rect x="5" y="4" width="18" height="2" fill="#f8f8f2" opacity="0.42"/><rect x="24" y="4" width="6" height="2" fill="#e8862a" opacity="0.9"/><rect x="31" y="4" width="19" height="2" fill="#f8f8f2" opacity="0.45"/><rect x="0" y="6" width="4" height="2" fill="#e8862a" opacity="0.9"/><rect x="5" y="6" width="14" height="2" fill="#f8f8f2" opacity="0.42"/><rect x="20" y="6" width="6" height="2" fill="#e8862a" opacity="0.9"/><rect x="27" y="6" width="8" height="2" fill="#f8f8f2" opacity="0.48"/><rect x="0" y="8" width="4" height="2" fill="#e8862a" opacity="0.9"/><rect x="5" y="8" width="9" height="2" fill="#f8f8f2" opacity="0.4"/><rect x="14" y="8" width="1" height="2" fill="#f8f8f2" opacity="0.4"/><rect x="15" y="8" width="6" height="2" fill="#f8f8f2" opacity="0.4"/><rect x="22" y="8" width="6" height="2" fill="#e8862a" opacity="0.9"/><rect x="29" y="8" width="22" height="2" fill="#f8f8f2" opacity="0.43"/><rect x="0" y="10" width="4" height="2" fill="#e8862a" opacity="0.9"/><rect x="5" y="10" width="9" height="2" fill="#f8f8f2" opacity="0.4"/><rect x="14" y="10" width="1" height="2" fill="#f8f8f2" opacity="0.4"/><rect x="15" y="10" width="6" height="2" fill="#f8f8f2" opacity="0.4"/><rect x="21" y="10" width="1" height="2" fill="#f8f8f2" opacity="0.4"/><rect x="22" y="10" width="17" height="2" fill="#f8f8f2" opacity="0.42"/><rect x="40" y="10" width="6" height="2" fill="#e8862a" opacity="0.9"/><rect x="47" y="10" width="28" height="2" fill="#f8f8f2" opacity="0.43"/><rect x="0" y="12" width="4" height="2" fill="#e8862a" opacity="0.9"/><rect x="5" y="12" width="14" height="2" fill="#f8f8f2" opacity="0.42"/><rect x="19" y="12" width="1" height="2" fill="#f8f8f2" opacity="0.4"/><rect x="20" y="12" width="7" height="2" fill="#f8f8f2" opacity="0.4"/><rect x="28" y="12" width="6" height="2" fill="#e8862a" opacity="0.9"/><rect x="35" y="12" width="18" height="2" fill="#f8f8f2" opacity="0.45"/><rect x="0" y="14" width="4" height="2" fill="#e8862a" opacity="0.9"/><rect x="5" y="14" width="6" height="2" fill="#f8f8f2" opacity="0.4"/><rect x="12" y="14" width="6" height="2" fill="#e8862a" opacity="0.9"/><rect x="19" y="14" width="11" height="2" fill="#f8f8f2" opacity="0.43"/><rect x="0" y="16" width="4" height="2" fill="#f92672" opacity="0.7"/><rect x="5" y="16" width="3" height="2" fill="#a6e22e" opacity="0.6"/><rect x="8" y="16" width="1" height="2" fill="#f8f8f2" opacity="0.4"/><rect x="9" y="16" width="6" height="2" fill="#a6e22e" opacity="0.6"/><rect x="16" y="16" width="6" height="2" fill="#f92672" opacity="0.7"/><rect x="23" y="16" width="1" height="2" fill="#f92672" opacity="0.7"/><rect x="0" y="18" width="6" height="2" fill="#f92672" opacity="0.7"/><rect x="7" y="18" width="2" height="2" fill="#a6e22e" opacity="0.6"/><rect x="0" y="22" width="3" height="2" fill="#f8f8f2" opacity="0.4"/><rect x="4" y="22" width="1" height="2" fill="#f92672" opacity="0.7"/><rect x="6" y="22" width="5" height="2" fill="#f8f8f2" opacity="0.46"/><rect x="11" y="22" width="1" height="2" fill="#f8f8f2" opacity="0.4"/><rect x="12" y="22" width="8" height="2" fill="#f8f8f2" opacity="0.55"/><rect x="20" y="22" width="1" height="2" fill="#f8f8f2" opacity="0.4"/><rect x="0" y="26" width="11" height="2" fill="#f8f8f2" opacity="0.43"/><rect x="11" y="26" width="1" height="2" fill="#f8f8f2" opacity="0.4"/><rect x="12" y="26" width="1" height="2" fill="#f8f8f2" opacity="0.4"/><rect x="0" y="30" width="16" height="2" fill="#f8f8f2" opacity="0.7"/><rect x="16" y="30" width="1" height="2" fill="#f92672" opacity="0.7"/><rect x="17" y="30" width="2" height="2" fill="#a6e22e" opacity="0.6"/><rect x="19" y="30" width="1" height="2" fill="#f8f8f2" opacity="0.4"/><rect x="20" y="30" width="7" height="2" fill="#f8f8f2" opacity="0.4"/><rect x="27" y="30" width="1" height="2" fill="#f8f8f2" opacity="0.4"/><rect x="28" y="30" width="3" height="2" fill="#a6e22e" opacity="0.6"/><rect x="31" y="30" width="1" height="2" fill="#f8f8f2" opacity="0.4"/><rect x="32" y="30" width="18" height="2" fill="#e6db74" opacity="0.67"/><rect x="50" y="30" width="1" height="2" fill="#f8f8f2" opacity="0.4"/><rect x="0" y="32" width="14" height="2" fill="#f8f8f2" opacity="0.7"/><rect x="14" y="32" width="1" height="2" fill="#f92672" opacity="0.7"/><rect x="15" y="32" width="2" height="2" fill="#a6e22e" opacity="0.6"/><rect x="17" y="32" width="1" height="2" fill="#f8f8f2" opacity="0.4"/><rect x="18" y="32" width="7" height="2" fill="#f8f8f2" opacity="0.4"/><rect x="25" y="32" width="1" height="2" fill="#f8f8f2" opacity="0.4"/><rect x="26" y="32" width="3" height="2" fill="#a6e22e" opacity="0.6"/><rect x="29" y="32" width="1" height="2" fill="#f8f8f2" opacity="0.4"/><rect x="30" y="32" width="14" height="2" fill="#e6db74" opacity="0.66"/><rect x="44" y="32" width="1" height="2" fill="#f8f8f2" opacity="0.4"/><rect x="0" y="36" width="2" height="2" fill="#a6e22e" opacity="0.6"/><rect x="2" y="36" width="1" height="2" fill="#f8f8f2" opacity="0.4"/><rect x="3" y="36" width="7" height="2" fill="#f8f8f2" opacity="0.4"/><rect x="10" y="36" width="1" height="2" fill="#f8f8f2" opacity="0.4"/><rect x="11" y="36" width="18" height="2" fill="#e6db74" opacity="0.67"/><rect x="29" y="36" width="1" height="2" fill="#f8f8f2" opacity="0.4"/><rect x="31" y="36" width="1" height="2" fill="#f92672" opacity="0.7"/><rect x="33" y="36" width="16" height="2" fill="#f8f8f2" opacity="0.7"/><rect x="0" y="38" width="2" height="2" fill="#a6e22e" opacity="0.6"/><rect x="2" y="38" width="1" height="2" fill="#f8f8f2" opacity="0.4"/><rect x="3" y="38" width="7" height="2" fill="#f8f8f2" opacity="0.4"/><rect x="10" y="38" width="1" height="2" fill="#f8f8f2" opacity="0.4"/><rect x="11" y="38" width="16" height="2" fill="#e6db74" opacity="0.66"/><rect x="27" y="38" width="1" height="2" fill="#f8f8f2" opacity="0.4"/><rect x="29" y="38" width="1" height="2" fill="#f92672" opacity="0.7"/><rect x="31" y="38" width="14" height="2" fill="#f8f8f2" opacity="0.7"/><rect x="0" y="42" width="10" height="2" fill="#f8f8f2" opacity="0.4"/><rect x="11" y="42" width="1" height="2" fill="#f92672" opacity="0.7"/><rect x="13" y="42" width="32" height="2" fill="#a6e22e" opacity="0.6"/><rect x="45" y="42" width="1" height="2" fill="#f8f8f2" opacity="0.4"/><rect x="46" y="42" width="1" height="2" fill="#f8f8f2" opacity="0.4"/><rect x="0" y="48" width="10" height="2" fill="#f8f8f2" opacity="0.43"/><rect x="11" y="48" width="1" height="2" fill="#f92672" opacity="0.7"/><rect x="13" y="48" width="12" height="2" fill="#e6db74" opacity="0.4"/><rect x="0" y="52" width="70" height="2" fill="#88846f" opacity="0.41"/><rect x="0" y="54" width="9" height="2" fill="#f8f8f2" opacity="0.4"/><rect x="10" y="54" width="1" height="2" fill="#f92672" opacity="0.7"/><rect x="12" y="54" width="19" height="2" fill="#f8f8f2" opacity="0.45"/><rect x="31" y="54" width="1" height="2" fill="#f8f8f2" opacity="0.4"/><rect x="32" y="54" width="19" height="2" fill="#f8f8f2" opacity="0.43"/><rect x="51" y="54" width="1" height="2" fill="#f8f8f2" opacity="0.4"/><rect x="4" y="56" width="10" height="2" fill="#fd971f" opacity="0.43"/><rect x="14" y="56" width="1" height="2" fill="#f92672" opacity="0.7"/><rect x="15" y="56" width="10" height="2" fill="#f8f8f2" opacity="0.43"/><rect x="25" y="56" width="1" height="2" fill="#f8f8f2" opacity="0.4"/><rect x="4" y="58" width="9" height="2" fill="#fd971f" opacity="0.4"/><rect x="13" y="58" width="1" height="2" fill="#f92672" opacity="0.7"/><rect x="14" y="58" width="10" height="2" fill="#f8f8f2" opacity="0.4"/><rect x="0" y="60" width="1" height="2" fill="#f8f8f2" opacity="0.4"/><rect x="0" y="64" width="9" height="2" fill="#f8f8f2" opacity="0.4"/><rect x="10" y="64" width="1" height="2" fill="#f92672" opacity="0.7"/><rect x="12" y="64" width="9" height="2" fill="#f8f8f2" opacity="0.4"/><rect x="21" y="64" width="1" height="2" fill="#f8f8f2" opacity="0.4"/><rect x="22" y="64" width="12" height="2" fill="#f8f8f2" opacity="0.43"/><rect x="34" y="64" width="1" height="2" fill="#f8f8f2" opacity="0.4"/><rect x="35" y="64" width="11" height="2" fill="#f8f8f2" opacity="0.43"/><rect x="46" y="64" width="1" height="2" fill="#f92672" opacity="0.7"/><rect x="47" y="64" width="12" height="2" fill="#e6db74" opacity="0.4"/><rect x="59" y="64" width="1" height="2" fill="#f8f8f2" opacity="0.4"/><rect x="61" y="64" width="13" height="2" fill="#f8f8f2" opacity="0.42"/><rect x="74" y="64" width="1" height="2" fill="#f92672" opacity="0.7"/><rect x="75" y="64" width="1" height="2" fill="#f8f8f2" opacity="0.4"/><rect x="76" y="64" width="3" height="2" fill="#e6db74" opacity="0.4"/><rect x="79" y="64" width="1" height="2" fill="#f8f8f2" opacity="0.4"/><rect x="80" y="64" width="1" height="2" fill="#ae81ff" opacity="0.4"/><rect x="81" y="64" width="1" height="2" fill="#f8f8f2" opacity="0.4"/><rect x="82" y="64" width="1" height="2" fill="#f8f8f2" opacity="0.4"/><rect x="0" y="70" width="3" height="2" fill="#f8f8f2" opacity="0.4"/><rect x="4" y="70" width="1" height="2" fill="#f92672" opacity="0.7"/><rect x="6" y="70" width="8" height="2" fill="#f8f8f2" opacity="0.48"/><rect x="14" y="70" width="1" height="2" fill="#f8f8f2" opacity="0.4"/><rect x="15" y="70" width="5" height="2" fill="#f8f8f2" opacity="0.4"/><rect x="20" y="70" width="1" height="2" fill="#f92672" opacity="0.7"/><rect x="21" y="70" width="16" height="2" fill="#e6db74" opacity="0.4"/><rect x="37" y="70" width="1" height="2" fill="#f8f8f2" opacity="0.4"/><rect x="0" y="72" width="6" height="2" fill="#f8f8f2" opacity="0.4"/><rect x="7" y="72" width="1" height="2" fill="#f92672" opacity="0.7"/><rect x="9" y="72" width="18" height="2" fill="#f8f8f2" opacity="0.45"/><rect x="27" y="72" width="1" height="2" fill="#f8f8f2" opacity="0.4"/><rect x="28" y="72" width="13" height="2" fill="#f8f8f2" opacity="0.42"/><rect x="41" y="72" width="1" height="2" fill="#f8f8f2" opacity="0.4"/><rect x="4" y="74" width="1" height="2" fill="#f8f8f2" opacity="0.4"/><rect x="8" y="76" width="1" height="2" fill="#f8f8f2" opacity="0.4"/><rect x="9" y="76" width="8" height="2" fill="#e6db74" opacity="0.4"/><rect x="17" y="76" width="1" height="2" fill="#f8f8f2" opacity="0.4"/><rect x="19" y="76" width="13" height="2" fill="#f8f8f2" opacity="0.42"/><rect x="32" y="76" width="1" height="2" fill="#f8f8f2" opacity="0.4"/><rect x="33" y="76" width="1" height="2" fill="#f8f8f2" opacity="0.4"/><rect x="8" y="78" width="1" height="2" fill="#f8f8f2" opacity="0.4"/><rect x="9" y="78" width="7" height="2" fill="#e6db74" opacity="0.4"/><rect x="16" y="78" width="1" height="2" fill="#f8f8f2" opacity="0.4"/><rect x="18" y="78" width="9" height="2" fill="#e6db74" opacity="0.4"/><rect x="27" y="78" width="1" height="2" fill="#f8f8f2" opacity="0.4"/><rect x="28" y="78" width="1" height="2" fill="#f8f8f2" opacity="0.4"/><rect x="4" y="80" width="1" height="2" fill="#f8f8f2" opacity="0.4"/><rect x="0" y="82" width="1" height="2" fill="#f8f8f2" opacity="0.4"/><rect x="0" y="86" width="21" height="2" fill="#f8f8f2" opacity="0.43"/><rect x="22" y="86" width="1" height="2" fill="#f92672" opacity="0.7"/><rect x="24" y="86" width="28" height="2" fill="#f8f8f2" opacity="0.43"/><rect x="52" y="86" width="1" height="2" fill="#f8f8f2" opacity="0.4"/><rect x="53" y="86" width="3" height="2" fill="#f8f8f2" opacity="0.4"/><rect x="56" y="86" width="1" height="2" fill="#f8f8f2" opacity="0.4"/><rect x="58" y="86" width="6" height="2" fill="#f8f8f2" opacity="0.4"/><rect x="64" y="86" width="1" height="2" fill="#f8f8f2" opacity="0.4"/><rect x="0" y="88" width="9" height="2" fill="#f8f8f2" opacity="0.43"/><rect x="10" y="88" width="1" height="2" fill="#f92672" opacity="0.7"/><rect x="12" y="88" width="22" height="2" fill="#f8f8f2" opacity="0.43"/><rect x="34" y="88" width="1" height="2" fill="#f8f8f2" opacity="0.4"/><rect x="35" y="88" width="9" height="2" fill="#f8f8f2" opacity="0.4"/><rect x="44" y="88" width="1" height="2" fill="#f8f8f2" opacity="0.4"/><rect x="46" y="88" width="21" height="2" fill="#f8f8f2" opacity="0.43"/><rect x="67" y="88" width="1" height="2" fill="#f8f8f2" opacity="0.4"/><rect x="0" y="94" width="1" height="2" fill="#f92672" opacity="0.7"/><rect x="1" y="94" width="3" height="2" fill="#f8f8f2" opacity="0.4"/><rect x="4" y="94" width="1" height="2" fill="#f8f8f2" opacity="0.4"/><rect x="5" y="94" width="5" height="2" fill="#a6e22e" opacity="0.6"/><rect x="10" y="94" width="1" height="2" fill="#f8f8f2" opacity="0.4"/><rect x="11" y="94" width="3" height="2" fill="#e6db74" opacity="0.4"/><rect x="14" y="94" width="1" height="2" fill="#f8f8f2" opacity="0.4"/><rect x="0" y="96" width="3" height="2" fill="#66d9ef" opacity="0.4"/><rect x="4" y="96" width="5" height="2" fill="#a6e22e" opacity="0.6"/><rect x="9" y="96" width="1" height="2" fill="#f8f8f2" opacity="0.4"/><rect x="10" y="96" width="1" height="2" fill="#f8f8f2" opacity="0.4"/><rect x="11" y="96" width="1" height="2" fill="#f8f8f2" opacity="0.4"/><rect x="4" y="98" width="6" height="2" fill="#f92672" opacity="0.7"/><rect x="11" y="98" width="15" height="2" fill="#f8f8f2" opacity="0.42"/><rect x="26" y="98" width="1" height="2" fill="#f8f8f2" opacity="0.4"/><rect x="27" y="98" width="11" height="2" fill="#e6db74" opacity="0.4"/><rect x="38" y="98" width="1" height="2" fill="#f8f8f2" opacity="0.4"/><rect x="0" y="104" width="1" height="2" fill="#f92672" opacity="0.7"/><rect x="1" y="104" width="3" height="2" fill="#f8f8f2" opacity="0.4"/><rect x="4" y="104" width="1" height="2" fill="#f8f8f2" opacity="0.4"/><rect x="5" y="104" width="5" height="2" fill="#a6e22e" opacity="0.6"/><rect x="10" y="104" width="1" height="2" fill="#f8f8f2" opacity="0.4"/><rect x="11" y="104" width="6" height="2" fill="#e6db74" opacity="0.4"/><rect x="17" y="104" width="1" height="2" fill="#f8f8f2" opacity="0.4"/><rect x="19" y="104" width="7" height="2" fill="#f8f8f2" opacity="0.4"/><rect x="26" y="104" width="1" height="2" fill="#f92672" opacity="0.7"/><rect x="27" y="104" width="1" height="2" fill="#f8f8f2" opacity="0.4"/><rect x="28" y="104" width="5" height="2" fill="#e6db74" opacity="0.58"/><rect x="33" y="104" width="1" height="2" fill="#f8f8f2" opacity="0.4"/><rect x="35" y="104" width="6" height="2" fill="#e6db74" opacity="0.6"/><rect x="41" y="104" width="1" height="2" fill="#f8f8f2" opacity="0.4"/><rect x="42" y="104" width="1" height="2" fill="#f8f8f2" opacity="0.4"/><rect x="0" y="106" width="3" height="2" fill="#66d9ef" opacity="0.4"/><rect x="4" y="106" width="4" height="2" fill="#a6e22e" opacity="0.6"/><rect x="8" y="106" width="1" height="2" fill="#f8f8f2" opacity="0.4"/><rect x="9" y="106" width="1" height="2" fill="#f8f8f2" opacity="0.4"/><rect x="10" y="106" width="1" height="2" fill="#f8f8f2" opacity="0.4"/><rect x="4" y="108" width="3" height="2" fill="#f8f8f2" opacity="0.4"/><rect x="8" y="108" width="1" height="2" fill="#f92672" opacity="0.7"/><rect x="10" y="108" width="7" height="2" fill="#f8f8f2" opacity="0.4"/><rect x="17" y="108" width="1" height="2" fill="#f8f8f2" opacity="0.4"/><rect x="18" y="108" width="4" height="2" fill="#f8f8f2" opacity="0.4"/><rect x="22" y="108" width="1" height="2" fill="#f8f8f2" opacity="0.4"/><rect x="23" y="108" width="5" height="2" fill="#e6db74" opacity="0.4"/><rect x="28" y="108" width="1" height="2" fill="#f8f8f2" opacity="0.4"/><rect x="4" y="110" width="5" height="2" fill="#f8f8f2" opacity="0.4"/><rect x="10" y="110" width="1" height="2" fill="#f92672" opacity="0.7"/><rect x="12" y="110" width="3" height="2" fill="#f8f8f2" opacity="0.4"/><rect x="4" y="112" width="5" height="2" fill="#a6e22e" opacity="0.6"/><rect x="9" y="112" width="1" height="2" fill="#f8f8f2" opacity="0.4"/><rect x="10" y="112" width="5" height="2" fill="#f8f8f2" opacity="0.4"/><rect x="15" y="112" width="1" height="2" fill="#f8f8f2" opacity="0.4"/><rect x="4" y="114" width="8" height="2" fill="#f8f8f2" opacity="0.4"/><rect x="13" y="114" width="1" height="2" fill="#f92672" opacity="0.7"/><rect x="15" y="114" width="9" height="2" fill="#f8f8f2" opacity="0.43"/><rect x="24" y="114" width="1" height="2" fill="#f8f8f2" opacity="0.4"/><rect x="25" y="114" width="6" height="2" fill="#f8f8f2" opacity="0.4"/><rect x="31" y="114" width="1" height="2" fill="#f8f8f2" opacity="0.4"/><rect x="32" y="114" width="1" height="2" fill="#f8f8f2" opacity="0.4"/><rect x="33" y="114" width="7" height="2" fill="#e6db74" opacity="0.4"/><rect x="40" y="114" width="1" height="2" fill="#f8f8f2" opacity="0.4"/><rect x="42" y="114" width="3" height="2" fill="#f8f8f2" opacity="0.4"/><rect x="45" y="114" width="1" height="2" fill="#f8f8f2" opacity="0.4"/><rect x="46" y="114" width="1" height="2" fill="#f8f8f2" opacity="0.4"/><rect x="4" y="116" width="5" height="2" fill="#a6e22e" opacity="0.6"/><rect x="9" y="116" width="1" height="2" fill="#f8f8f2" opacity="0.4"/><rect x="10" y="116" width="13" height="2" fill="#e6db74" opacity="0.42"/><rect x="23" y="116" width="1" height="2" fill="#f8f8f2" opacity="0.4"/><rect x="25" y="116" width="8" height="2" fill="#f8f8f2" opacity="0.4"/><rect x="33" y="116" width="1" height="2" fill="#f8f8f2" opacity="0.4"/><rect x="34" y="116" width="8" height="2" fill="#e6db74" opacity="0.4"/><rect x="42" y="116" width="1" height="2" fill="#f8f8f2" opacity="0.4"/><rect x="43" y="116" width="1" height="2" fill="#f8f8f2" opacity="0.4"/><rect x="4" y="118" width="6" height="2" fill="#f92672" opacity="0.7"/><rect x="11" y="118" width="3" height="2" fill="#a6e22e" opacity="0.6"/><rect x="14" y="118" width="1" height="2" fill="#f8f8f2" opacity="0.4"/><rect x="15" y="118" width="8" height="2" fill="#f8f8f2" opacity="0.4"/><rect x="23" y="118" width="1" height="2" fill="#f8f8f2" opacity="0.4"/><rect x="24" y="118" width="8" height="2" fill="#e6db74" opacity="0.4"/><rect x="32" y="118" width="1" height="2" fill="#f8f8f2" opacity="0.4"/><rect x="33" y="118" width="1" height="2" fill="#f8f8f2" opacity="0.4"/><rect x="0" y="128" width="2" height="2" fill="#f92672" opacity="0.7"/><rect x="3" y="128" width="8" height="2" fill="#f8f8f2" opacity="0.55"/><rect x="12" y="128" width="1" height="2" fill="#f92672" opacity="0.7"/><rect x="13" y="128" width="1" height="2" fill="#f92672" opacity="0.7"/><rect x="15" y="128" width="10" height="2" fill="#e6db74" opacity="0.52"/><rect x="25" y="128" width="1" height="2" fill="#f8f8f2" opacity="0.4"/><rect x="4" y="130" width="3" height="2" fill="#f8f8f2" opacity="0.4"/><rect x="7" y="130" width="1" height="2" fill="#f8f8f2" opacity="0.4"/><rect x="8" y="130" width="3" height="2" fill="#f8f8f2" opacity="0.4"/><rect x="11" y="130" width="1" height="2" fill="#f8f8f2" opacity="0.4"/><rect x="12" y="130" width="4" height="2" fill="#fd971f" opacity="0.4"/><rect x="16" y="130" width="1" height="2" fill="#f92672" opacity="0.7"/><rect x="17" y="130" width="9" height="2" fill="#e6db74" opacity="0.4"/><rect x="26" y="130" width="1" height="2" fill="#f8f8f2" opacity="0.4"/><rect x="28" y="130" width="4" height="2" fill="#fd971f" opacity="0.4"/><rect x="32" y="130" width="1" height="2" fill="#f92672" opacity="0.7"/><rect x="34" y="130" width="4" height="2" fill="#ae81ff" opacity="0.4"/><rect x="38" y="130" width="1" height="2" fill="#f8f8f2" opacity="0.4"/><rect x="40" y="130" width="5" height="2" fill="#fd971f" opacity="0.4"/><rect x="45" y="130" width="1" height="2" fill="#f92672" opacity="0.7"/><rect x="47" y="130" width="4" height="2" fill="#ae81ff" opacity="0.48"/><rect x="51" y="130" width="1" height="2" fill="#f8f8f2" opacity="0.4"/><rect x="5" y="0" width="5" height="2" fill="#e0b400"/><rect x="5" y="4" width="18" height="2" fill="#e0b400"/><rect x="5" y="6" width="14" height="2" fill="#e0b400"/><rect x="5" y="8" width="16" height="2" fill="#e0b400"/><rect x="5" y="10" width="34" height="2" fill="#e0b400"/><rect x="5" y="12" width="22" height="2" fill="#e0b400"/><rect x="5" y="14" width="6" height="2" fill="#e0b400"/><rect x="27" y="6" width="8" height="2" fill="#e08a10"/><rect x="6" y="70" width="8" height="2" fill="#f09a18"/></svg>
<div id="status"><div class="rem"><svg style="left:0;top:0;width:28px;height:7px" viewBox="0 0 28 7"><path d="M11.800 7.300 17.600 3.200M15 5.700 17.200 7.500" stroke="#fff" stroke-width="1.300"/></svg></div>
<svg style="left:34px;top:2.500px" viewBox="0 0 16 16"><circle cx="3.600" cy="3" r="2"/><circle cx="10.500" cy="4.800" r="2"/><path d="M4 5v9M12 7c0 3-8 2-8 5"/></svg>
<svg style="left:78px;top:3.500px" viewBox="0 0 16 16"><path d="M2 8a6 6 0 0 1 12 0"/></svg>
<svg style="left:101px;top:3px" viewBox="0 0 16 16"><circle cx="8" cy="8" r="6.500"/></svg>
<svg style="left:124.700px;top:2.300px" viewBox="0 0 16 16"><path d="M8 1.500 15 14.500H1z"/></svg>
<svg style="left:1013px;top:3.500px" viewBox="0 0 16 16"><path d="M6 2C4 2 4.500 5 4.500 6S3 8 3 8M10 2c2 0 1.500 3 1.500 4S13 8 13 8"/></svg>
<svg style="left:1160px;top:4px" viewBox="0 0 16 16"><path d="M3 3v4M8 3v4M13 3v4M2 3h12" stroke-width="1.800"/></svg>
<svg style="left:1281px;top:4px" viewBox="0 0 16 16"><path d="M2 8a6 6 0 0 1 12 0"/></svg>
<svg style="left:1338px;top:4px" viewBox="0 0 16 16"><path d="M2 8a6 6 0 0 1 12 0"/></svg>
</div>
</body>
</html>
